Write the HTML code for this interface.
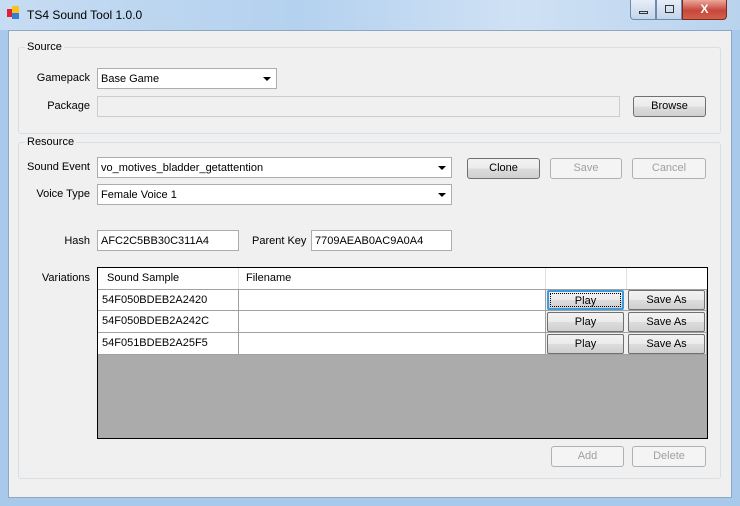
<!DOCTYPE html>
<html><head><style>
*{box-sizing:border-box;margin:0;padding:0}
body{width:740px;height:506px;overflow:hidden;font-family:"Liberation Sans",sans-serif;font-size:11px;color:#000;background:#a9c9ea;position:relative}
.a{position:absolute}
.title{left:0;top:0;width:740px;height:30px;background:linear-gradient(90deg,#c6dcf2,#b4d1ef 40%,#cfe1f4 70%,#b9d3ee)}
.client{left:8px;top:30px;width:724px;height:468px;background:#f0f0f0;border:1px solid #8ea8c4}
.grp{border:1px solid #d5dfe5;border-radius:3px}
.gl{background:#f0f0f0;padding:0 2px}
.in{background:#fff;border:1px solid #abadb3;padding:3px 3px;height:21px;line-height:14px}
.dis{background:#f0f0f0;border-color:#cdcdcd}
.btn{border:1px solid #707070;border-radius:3px;background:linear-gradient(#f2f2f2,#ebebeb 50%,#dddddd 51%,#cfcfcf);text-align:center;line-height:19px;height:21px}
.bd{border-color:#adb2b5;background:#f4f4f4;color:#a0a0a0}
.lbl{text-align:right}
.arr{position:absolute;right:5px;top:8px;border-left:4px solid transparent;border-right:4px solid transparent;border-top:4px solid #000}
.cell{position:absolute;border-right:1px solid #a0a0a0;border-bottom:1px solid #a0a0a0;background:#fff;padding:4px 4px;height:22px}
.gb{position:absolute;height:20px;line-height:18px;border:1px solid #707070;border-radius:2px;background:linear-gradient(#f2f2f2,#ebebeb 50%,#dddddd 51%,#cfcfcf);text-align:center}
</style></head><body>
<div class="a title">
 <div class="a" style="left:7px;top:9px;width:6px;height:8px;background:#d23"></div>
 <div class="a" style="left:12px;top:6px;width:7px;height:8px;background:#f6c21c"></div>
 <div class="a" style="left:12px;top:13px;width:7px;height:6px;background:#3a7bd5"></div>
 <div class="a" style="left:27px;top:8px;font-size:12px">TS4 Sound Tool 1.0.0</div>
 <div class="a" style="left:630px;top:0;width:26px;height:20px;border:1px solid #6d8bb0;border-top:none;border-radius:0 0 0 4px;background:linear-gradient(#e6eef8,#c3d4ea)"><div class="a" style="left:8px;top:11px;width:9px;height:3px;border:1px solid #333"></div></div>
 <div class="a" style="left:656px;top:0;width:26px;height:20px;border:1px solid #6d8bb0;border-top:none;background:linear-gradient(#e6eef8,#c3d4ea)"><div class="a" style="left:8px;top:5px;width:9px;height:8px;border:1px solid #333"></div></div>
 <div class="a" style="left:682px;top:0;width:45px;height:20px;border:1px solid #7a2a20;border-top:none;border-radius:0 0 4px 0;background:linear-gradient(#e9a99c,#c8473a 55%,#d0604b);color:#fff;font-weight:bold;text-align:center;line-height:18px;font-size:12px">X</div>
</div>
<div class="a client"></div>

<div class="a grp" style="left:18px;top:47px;width:703px;height:87px"></div>
<div class="a gl" style="left:25px;top:41px">Source</div>
<div class="a lbl" style="left:20px;top:72px;width:70px">Gamepack</div>
<div class="a in" style="left:97px;top:68px;width:180px">Base Game<div class="arr"></div></div>
<div class="a lbl" style="left:20px;top:100px;width:70px">Package</div>
<div class="a in dis" style="left:97px;top:96px;width:523px"></div>
<div class="a btn" style="left:633px;top:96px;width:73px">Browse</div>

<div class="a grp" style="left:18px;top:142px;width:703px;height:337px"></div>
<div class="a gl" style="left:25px;top:136px">Resource</div>
<div class="a lbl" style="left:20px;top:161px;width:70px">Sound Event</div>
<div class="a in" style="left:97px;top:157px;width:355px">vo_motives_bladder_getattention<div class="arr"></div></div>
<div class="a lbl" style="left:20px;top:188px;width:70px">Voice Type</div>
<div class="a in" style="left:97px;top:184px;width:355px">Female Voice 1<div class="arr"></div></div>
<div class="a btn" style="left:467px;top:158px;width:73px">Clone</div>
<div class="a btn bd" style="left:550px;top:158px;width:72px">Save</div>
<div class="a btn bd" style="left:632px;top:158px;width:74px">Cancel</div>
<div class="a lbl" style="left:20px;top:235px;width:70px">Hash</div>
<div class="a in" style="left:97px;top:230px;width:142px">AFC2C5BB30C311A4</div>
<div class="a" style="left:252px;top:235px">Parent Key</div>
<div class="a in" style="left:311px;top:230px;width:141px">7709AEAB0AC9A0A4</div>
<div class="a lbl" style="left:20px;top:272px;width:70px">Variations</div>

<div class="a" style="left:97px;top:267px;width:611px;height:172px;border:1px solid #000;background:#ababab;overflow:hidden">
 <div class="cell" style="left:0;top:0;width:141px;height:22px;border-right-color:#e0e0e0;border-bottom:none;padding-left:9px">Sound Sample</div>
 <div class="cell" style="left:141px;top:0;width:307px;height:22px;border-right-color:#e0e0e0;border-bottom:none;padding-left:7px">Filename</div>
 <div class="cell" style="left:448px;top:0;width:81px;height:22px;border-right-color:#e0e0e0;border-bottom:none"></div>
 <div class="cell" style="left:529px;top:0;width:80px;height:22px;border-right:none;border-bottom:none"></div>
 <div class="cell" style="left:0;top:21px;width:141px;border-top:1px solid #a0a0a0">54F050BDEB2A2420</div>
 <div class="cell" style="left:141px;top:21px;width:307px;border-top:1px solid #a0a0a0"></div>
 <div class="cell" style="left:448px;top:21px;width:161px;border-top:1px solid #a0a0a0;background:#f0f0f0"></div>
 <div class="cell" style="left:0;top:43px;width:141px">54F050BDEB2A242C</div>
 <div class="cell" style="left:141px;top:43px;width:307px"></div>
 <div class="cell" style="left:448px;top:43px;width:161px;background:#f0f0f0"></div>
 <div class="cell" style="left:0;top:65px;width:141px">54F051BDEB2A25F5</div>
 <div class="cell" style="left:141px;top:65px;width:307px"></div>
 <div class="cell" style="left:448px;top:65px;width:161px;background:#f0f0f0"></div>
 <div class="gb" style="left:449px;top:22px;width:77px;border:2px solid #3d9bdc;outline:1px dotted #000;outline-offset:-4px">Play</div>
 <div class="gb" style="left:530px;top:22px;width:77px">Save As</div>
 <div class="gb" style="left:449px;top:44px;width:77px">Play</div>
 <div class="gb" style="left:530px;top:44px;width:77px">Save As</div>
 <div class="gb" style="left:449px;top:66px;width:77px">Play</div>
 <div class="gb" style="left:530px;top:66px;width:77px">Save As</div>
</div>

<div class="a btn bd" style="left:551px;top:446px;width:73px">Add</div>
<div class="a btn bd" style="left:632px;top:446px;width:74px">Delete</div>
</body></html>
